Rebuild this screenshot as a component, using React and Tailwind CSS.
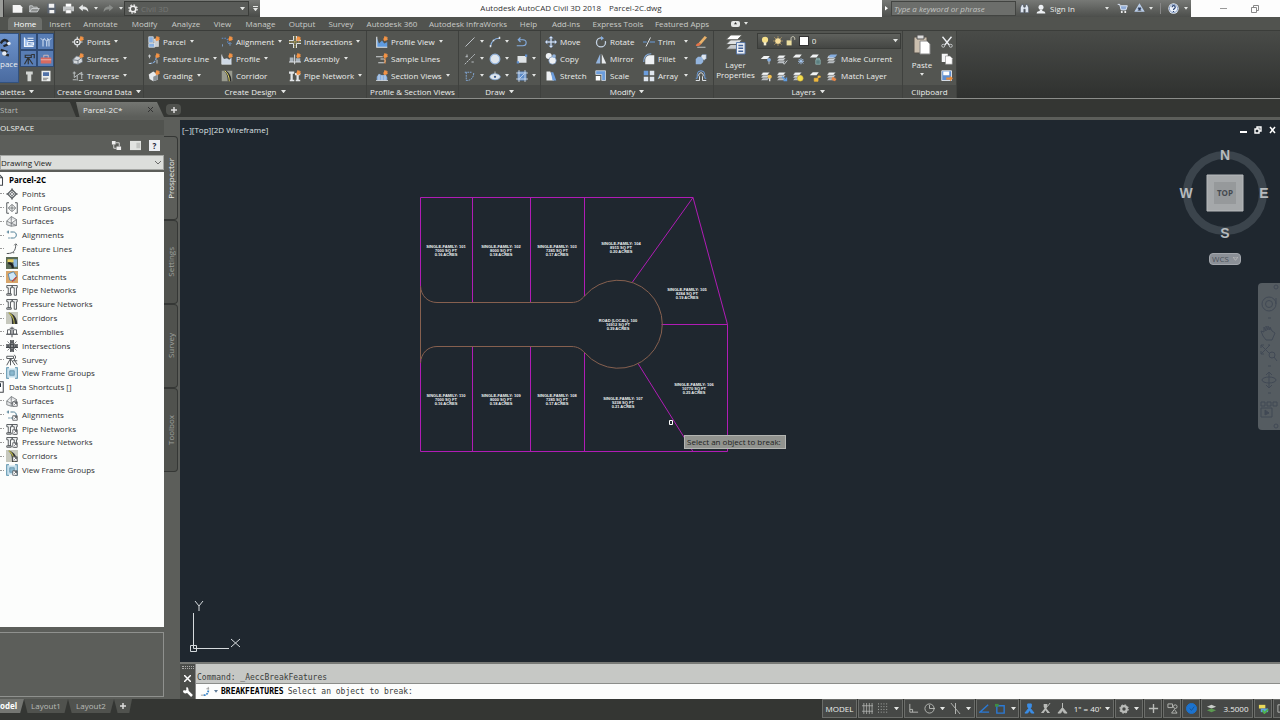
import clsx from 'clsx';

const LIGHT = '#dfe3e6';
const BLUE = '#86aee0';

const Spark = () => <path d="M11 0l1.2 1 1.3-1 .6 1.6 1.9.4-1 1.5 1 1.6-1.8.3-.6 1.6-1.3-1-1.6 1-.3-1.8L9.500 4l1.200-1.300z" fill="#f39345" />;

const sheets = (
  <g stroke="#4a4d4a" strokeWidth=".6">
    <path d="M4 10h9l-3 4H1z" fill="#b7bcc0" />
    <path d="M4 6.500h9l-3 4H1z" fill="#cfd3d6" />
    <path d="M4 3h9l-3 4H1z" fill="#f2f4f5" />
  </g>
);

// All drawings share a 16 unit box.
const glyphs = {
  newFile: <path d="M1 3h11l3 3v8H1z" fill="#f5f5f5" />,
  open: <path d="M1 13V4h4l1 2h6v2M1 13l3-5h11l-3 5z" fill="#8d908f" stroke={LIGHT} />,
  save: <><path d="M2 1h12v14H2z" fill="#5b6472" /><path d="M4 1h8v6H4zM5 10h7v5H5z" fill="#f3f3f3" /></>,
  print: <><path d="M4 1h8v5H4z" fill="#fff" /><path d="M0 5h16v7H0z" fill="#c4c7c8" /><path d="M4 10h8v5H4z" fill="#fff" stroke="#777" strokeWidth=".6" /></>,
  undo: <path d="M1 7l6-5v3c5 0 8 2 8 8-2-3-4-4-8-4v3z" fill="#e5e7e8" />,
  redo: <path d="M15 7L9 2v3c-5 0-8 2-8 8 2-3 4-4 8-4v3z" fill="#8b8e8b" />,
  gear: <g fill="none" stroke="#f0f0f0"><circle cx="8" cy="8" r="4.500" strokeWidth="2.500" /><circle cx="8" cy="8" r="6.600" strokeWidth="2" strokeDasharray="2.600 2.600" /></g>,
  gearDim: <g fill="none" stroke="#b9bbb8"><circle cx="8" cy="8" r="4.500" strokeWidth="3.500" /><circle cx="8" cy="8" r="6.600" strokeWidth="2" strokeDasharray="2.600 2.600" /></g>,
  binoculars: <><path d="M2 14V7l2-5h2l1 4h2l1-4h2l2 5v7h-5V9H7v5z" fill="#dfe6f0" stroke="#3a4659" strokeWidth=".8" /></>,
  user: <><circle cx="8" cy="5" r="4" fill="#eef1f4" /><path d="M1 15c0-3 3-4 5-4V9h4v2c2 0 5 1 5 4z" fill="#eef1f4" /></>,
  cart: <><path d="M1 2h3l2 8h7l2-6H5" fill="#8fabd6" stroke="#dfe8f6" strokeWidth="1.400" /><circle cx="7" cy="13" r="1.500" fill="#fff" /><circle cx="12" cy="13" r="1.500" fill="#fff" /></>,
  apps: <><path d="M8 2L2 12h12zM2 12l6-4 6 4M8 2v6" fill="none" stroke="#b9cdea" strokeWidth="1.800" /><circle cx="8" cy="8.500" r="2" fill="#26395e" /></>,
  help: <><circle cx="8" cy="8" r="7.500" fill="#eef3fb" /><circle cx="8" cy="8" r="6" fill="none" stroke="#5878ab" /><path d="M6 6c0-3 4.500-3 4.500 0C10.500 8 8 8 8 10M8 11.500v1.500" stroke="#27406e" strokeWidth="1.800" fill="none" /></>,
  points: <><path d="M7 1v14M0 8h14" stroke={LIGHT} strokeWidth="1.500" /><circle cx="7" cy="8" r="3.800" fill="#4a4d4a" stroke={LIGHT} strokeWidth="1.800" /><circle cx="7" cy="8" r="1.400" fill="#fff" /><Spark /></>,
  surfaces: <><path d="M1 9l5-5 7 2 1 6-6 3-6-1z" fill="#d5d9dc" stroke="#6f7a85" /><path d="M1 9l7 1 5-4M8 10v5" stroke="#59636e" fill="none" /><Spark /></>,
  traverse: <path d="M3 2v8M1 4h4M3 10l4-3 6-4v9M7 7v7M1 13h5M9 14h6M10 5l5 1" fill="none" stroke="#c3c8cb" strokeWidth="1.200" />,
  parcel: <><path d="M1 1h6v8H1zM1 10h8v5H1z" fill={BLUE} stroke={LIGHT} /><path d="M8 4h6v10H9z" fill="#c9ced3" stroke="#fff" strokeWidth=".6" /><Spark /></>,
  feature: <><path d="M2 14c6 0 9-3 9-10" fill="none" stroke={BLUE} strokeWidth="1.500" strokeDasharray="4 1" /><path d="M2 2v5M0 4h4M1 14h3M12 9v5" stroke={LIGHT} /><Spark /></>,
  grading: <><path d="M1 6l6-4 6 4v7l-6 2-5-3z" fill="#e8eaec" /><path d="M7 9l6-3v7l-6 2z" fill="#8b9196" /><Spark /></>,
  alignment: <><path d="M1 3h5c4 0 3 7 3 7h5" fill="none" stroke="#5f8fd0" strokeWidth="1.500" strokeDasharray="2 1.500" /><path d="M2 11v3M12 8v5" stroke={BLUE} /><Spark /></>,
  profile: <><path d="M1 3l3 5 4-1 3 2 3-3v9H1z" fill="#cfd9e6" /><path d="M1 2v13h13" stroke={LIGHT} fill="none" /><Spark /></>,
  corridor: <><path d="M1 1h14v14H1z" fill="#999b8f" /><path d="M4 1c4 3 5 8 5 14h5c0-7-3-11-7-14z" fill="#26282a" /><path d="M5 1c4 3 6 8 6 14" stroke="#e8dc6a" fill="none" strokeWidth="1.300" /></>,
  intersections: <><path d="M6 0v6H0M10 0v6h6M6 16v-6H0M10 16v-6h6" fill="none" stroke={LIGHT} strokeWidth="1.300" /><path d="M8 0v16M0 8h16" stroke="#e5cc59" strokeDasharray="2 1" /><Spark /></>,
  assembly: <><path d="M1 6h5v6H1zM9 7h6v5H9z" fill="#aab4bd" /><path d="M7.500 2v13M0 12h16" stroke={LIGHT} strokeWidth="1.300" /><Spark /></>,
  pipes: <><path d="M0 2h7v3H5v8h2v2H1v-2h1V5H0zM8 4h7v3h-2v6h2v2H9v-2h1V7H8z" fill="#e3e6e8" /><Spark /></>,
  profileView: <><path d="M1 2v13h14V8l-4 2-3-4-4 4z" fill="#5f9be0" /><path d="M1 1v14h14" stroke={LIGHT} fill="none" strokeWidth="1.500" /><Spark /></>,
  sampleLines: <><path d="M0 5h9M3 13h7c3 0 3-5 0-5H6" stroke={LIGHT} fill="none" strokeWidth="1.200" /><path d="M12 6v8" stroke="#f39345" strokeWidth="1.500" /><Spark /></>,
  sectionViews: <><path d="M1 14V9l3-4 4 2 5-1 2 4v4z" fill={BLUE} /><path d="M0 14h16M4 6v8M8 7v7M12 7v7" stroke={LIGHT} /><Spark /></>,
  line: <path d="M2 14L14 2" stroke="#c6ccd1" strokeWidth="1.200" />,
  xline: <path d="M1 15L15 1M2 5h3M10 12h4M4 2v3" stroke="#c6ccd1" strokeWidth="1.200" strokeDasharray="3 1" />,
  polyline: <path d="M3 3v11c6 0 10-3 10-11M1 3h9" stroke={BLUE} fill="none" strokeDasharray="2.500 1" strokeWidth="1.200" />,
  arc: <><path d="M2 14C3 8 7 3 14 3" fill="none" stroke={BLUE} strokeWidth="1.500" /><path d="M1 12h2v3H1zM13 1h2v3h-2zM5 5h2v2H5z" fill={LIGHT} /></>,
  circle: <circle cx="8" cy="8" r="6.500" fill="#dfe6ee" stroke="#93b4dd" strokeWidth="1.500" />,
  ellipse: <><ellipse cx="8" cy="9" rx="7" ry="4" fill="#dfe6ee" stroke={BLUE} /><circle cx="8" cy="9" r="1.500" fill="#35568a" /><path d="M8 2v5" stroke={LIGHT} /></>,
  pline: <path d="M1 13h8c6 0 6-8 0-8H4M6 2L3 5l3 3" fill="none" stroke={BLUE} strokeWidth="1.500" />,
  rect: <><path d="M2 4h12v9H2z" fill="#dfe3e6" /><path d="M12 2h3v3h-3zM1 11h3v3H1z" fill="#5f8fd0" /></>,
  hatch: <><path d="M2 2h12v12H2z" fill="#5e8cc9" /><path d="M4 0v16M12 0v16M0 4h16M0 12h16M5 11l6-6" stroke="#dfe6ee" /></>,
  move: <path d="M8 0l3 3H9v4h4V5l3 3-3 3V9H9v4h2l-3 3-3-3h2V9H3v2L0 8l3-3v2h4V3H5z" fill="#dbe6f4" stroke="#5d7fae" strokeWidth=".5" />,
  copy: <><circle cx="5" cy="4" r="4" fill="#eef1f4" /><circle cx="10" cy="10" r="5" fill="#eef1f4" stroke="#5d7fae" strokeWidth=".8" /><circle cx="12" cy="4" r="2.500" fill="#93b4dd" /></>,
  stretch: <><path d="M2 2h5l5 12H2z" fill="#eef1f4" /><path d="M8 3h3l4 11h-5z" fill="#6b9ddd" /></>,
  rotate: <><circle cx="8" cy="8.500" r="6" fill="none" stroke="#c5d3e4" strokeWidth="1.700" strokeDasharray="30 5" /><path d="M8 0l4 3-4 3z" fill={BLUE} /></>,
  mirror: <><path d="M7 1v13H1z" fill="#93b4dd" /><path d="M9 1v13h6z" fill="#e8ebee" /></>,
  scale: <><path d="M1 1h13v13H9V6H1z" fill="#6b9ddd" stroke={LIGHT} /><path d="M1 8h6v6H1z" fill="#fff" /></>,
  trim: <><path d="M0 8h5M9 8h7" stroke="#6b9ddd" strokeWidth="1.500" /><path d="M4 14L10 2" stroke={LIGHT} strokeWidth="1.300" /></>,
  fillet: <><path d="M3 15V9c0-4 3-6 6-6h6v12z" fill="#eef1f4" /><path d="M1 12C1 5 5 1 11 1" stroke={BLUE} fill="none" strokeWidth="1.500" /></>,
  array: <><path d="M1 1h6v6H1z" fill="#6b9ddd" /><path d="M9 1h6v6H9zM1 9h6v6H1zM9 9h6v6H9z" fill="#dfe6ee" /></>,
  erase: <><path d="M5 9L13 0l3 2-8 9z" fill="#e9b16a" /><path d="M1 13c1-3 3-4 5-4l2 2c-1 2-4 3-7 2z" fill="#e2744a" /><path d="M3 15h11" stroke={LIGHT} /></>,
  explode: <><path d="M1 8l3-3h7v7l-3 3H1z" fill="#93b4dd" /><path d="M8 4l2-2h5v5l-3 3" fill="#dfe6ee" stroke="#5d7fae" strokeWidth=".6" /></>,
  offset: <><path d="M1 14h5V9a3 3 0 114 0v5h5" fill="none" stroke={LIGHT} strokeWidth="1.300" /><path d="M1 11h2V6a5 5 0 0110 0v5h2" fill="none" stroke="#6b9ddd" strokeWidth="1.300" /></>,
  layerOff: <><path d="M5 4h8l-3 4H1z" fill="#f1f3f4" /><circle cx="12" cy="9" r="2.500" fill={BLUE} /><path d="M12 11v4" stroke={LIGHT} /></>,
  layerIso: <>{sheets}<path d="M9 12l2 3 4-5" stroke="#c9ced3" fill="none" strokeWidth="1.300" /></>,
  layerFreeze: <><path d="M5 2h8l-3 4H1z" fill="#f1f3f4" /><path d="M12 7v8M8 11h8M9 8l6 6M15 8l-6 6" stroke="#a8c8f0" strokeWidth="1.200" /></>,
  layerLock: <><path d="M5 2h8l-3 4H1z" fill="#f1f3f4" /><path d="M9 9h6v6H9zM10 9V7h4v2" fill="#5c7f80" stroke="#8fb0ae" /></>,
  makeCurrent: <>{sheets}<path d="M6 2h9l-3 4H3z" fill={BLUE} /></>,
  layerOn: <>{sheets}<circle cx="13" cy="9" r="2.800" fill="#f4c04e" /><path d="M13 11v4" stroke="#fff" strokeWidth="1.500" /></>,
  layerUniso: <>{sheets}<path d="M8 9l6 5M14 10v4h-4" stroke="#5f9be0" strokeWidth="1.800" fill="none" /></>,
  layerThaw: <>{sheets}<circle cx="11" cy="11" r="4" fill="#f4e04e" stroke="#b58e2c" strokeWidth=".6" /></>,
  layerUnlock: <><path d="M5 3h8l-3 4H1z" fill="#f1f3f4" /><path d="M7 11h5v4H7zM12 11V8h3v2" fill="#f0b73d" stroke="#f0b73d" /></>,
  matchLayer: <>{sheets}<path d="M9 9l5 3-2 3-5-2z" fill="#e8884a" /></>,
  bulb: <><circle cx="8" cy="6" r="5" fill="#f7e08a" /><path d="M6 10h4v5H6z" fill="#f3ecd0" /></>,
  sun: <><path d="M8 0v16M0 8h16M2 2l12 12M14 2L2 14" stroke="#c9a869" /><circle cx="8" cy="8" r="4.500" fill="#f5dc9a" /></>,
  lock: <><path d="M1 7h8v8H1z" fill="#ecdfa0" /><path d="M8 7V4c0-4 6-4 6 0v2" fill="none" stroke="#d8d4c0" strokeWidth="1.500" /></>,
  cut: <><path d="M2 1l9 11M14 1L5 12" stroke="#eef1f4" strokeWidth="1.800" /><circle cx="3" cy="13" r="2" fill="none" stroke={LIGHT} /><circle cx="13" cy="13" r="2" fill="none" stroke={LIGHT} /></>,
  copyClip: <><path d="M1 1h8v11H1z" fill="#f5f6f7" /><path d="M6 4h6l3 3v8H6z" fill="#fff" stroke="#888" strokeWidth=".8" /></>,
  pasteSpecial: <><path d="M1 1h13v13H1z" fill="#5f8fd0" stroke="#fff" /><path d="M3 2h8v5H3z" fill="#fff" /><path d="M7 10h5V8l4 3-4 4v-2H7z" fill="#e58a3a" /></>,
  paletteA: <path d="M2 2v12h12M6 3h8M6 6h8M6 9h8v3H6z" stroke="#eef3fa" strokeWidth="1.600" fill="#9fc0ee" />,
  paletteB: <path d="M1 3l3 3 2-3M4 6v8M6 4l3 3 2-3M9 7v7M10 3l2 3 3-3M12 6v8" stroke="#dce8f8" fill="none" strokeWidth="1.300" />,
  tripod: <path d="M3 3h8v3H3zM7 6l-5 9M7 6v9M7 6l6 9M11 2h4v5" stroke="#313437" fill="none" strokeWidth="1.600" />,
  toolbox: <><path d="M1 6h14v8H1z" fill="#d86a5f" /><path d="M5 6V3h6v3M1 9h14" stroke="#f2c5bf" fill="none" /></>,
  calc: <path d="M4 2h9v4h-2v9H6V6H4z" fill="#d2d5d2" />,
  sheet: <><path d="M2 1h12v14H2z" fill="#eceeed" /><path d="M4 3h8v5H4z" fill="#5272a8" /><path d="M4 11h7M4 13h5" stroke="#666" /></>,
  tPoints: <><path d="M8 0v16M0 8h16" stroke="#54585c" /><path d="M8 2l6 6-6 6-6-6z" fill="none" stroke="#54585c" strokeWidth="1.500" /><circle cx="8" cy="8" r="2" fill="#fff" stroke="#54585c" /></>,
  tPointGroups: <><path d="M4 1H1v14h3M12 1h3v14h-3" stroke="#54585c" fill="none" strokeWidth="1.300" /><path d="M8 3l5 5-5 5-5-5zM8 4v8M4 8h8" stroke="#54585c" fill="none" /></>,
  tSurfaces: <path d="M1 8l6-6 7 4v8l-7 1-6-2zM1 8l6 3 7-5M7 2v13M7 11l7 3" stroke="#6a6e72" fill="#e3e5e6" />,
  tAlignments: <path d="M1 4h3M6 4h4c5 0 5 8 0 8H6M3 12h2M3 2v4" stroke="#4d7c94" fill="none" strokeWidth="1.300" />,
  tFeature: <path d="M2 14c7 0 11-3 11-12M11 3l2-2 2 2M1 14h3M9 13h2" stroke="#54585c" fill="none" strokeWidth="1.300" />,
  tSites: <><path d="M0 0h16v16H0z" fill="#5a6a55" /><path d="M2 3h9v4H2z" fill="#e4cf60" /><path d="M10 3h5v10h-5z" fill="#8fbbe0" /><path d="M3 8c5 0 6 3 6 7" stroke="#1d2022" strokeWidth="3" fill="none" /></>,
  tCatch: <><path d="M0 0h16v16H0z" fill="#d8a66a" /><path d="M3 4l7-3 4 6-3 6-6-1z" fill="#cfe7f6" stroke="#3a78ad" /><path d="M8 14l6-6" stroke="#c4433a" strokeWidth="1.500" /></>,
  tPipes: <path d="M1 2h7v3H6v8H3V5H1zM8 2h7v3h-1v10h-3V5H9zM1 13h6v2H1z" fill="#eceeef" stroke="#4f5357" strokeWidth="1.200" />,
  tCorridor: <><path d="M0 0h16v16H0z" fill="#c6c8bd" /><path d="M3 1c5 4 5 9 5 15h7C15 9 11 3 5 1z" fill="#303234" /><path d="M4 1c5 4 7 9 7 15" stroke="#b9b44c" fill="none" strokeWidth="1.500" /></>,
  tAssembly: <><path d="M2 5h4v6H2zM10 5h4v6h-4z" fill="none" stroke="#54585c" strokeWidth="1.200" /><path d="M8 1v14M0 11h16M5 3h6" stroke="#54585c" strokeWidth="1.400" /></>,
  tCross: <><path d="M8 0v16M0 8h16" stroke="#44484c" strokeWidth="5" /><path d="M8 0v16M0 8h16" stroke="#d9d9d9" strokeWidth="1" strokeDasharray="2 1.500" /><path d="M2 2l3 3M14 2l-3 3M2 14l3-3M14 14l-3-3" stroke="#54585c" /></>,
  tSurvey: <path d="M1 3h9v3H1zM6 6l-5 9M6 6v9M6 6l6 9M11 1l2 3-2 4 4 6M9 9h6" stroke="#54585c" fill="none" strokeWidth="1.300" />,
  tFrames: <><path d="M2 2h12v12H2z" fill="#c5e0ee" /><path d="M4 1H1v14h3M12 1h3v14h-3" stroke="#4a88a6" fill="none" strokeWidth="1.400" /><path d="M5 5h6v6H5z" fill="#8bb8cf" stroke="#5e8ba2" /></>,
  tDoc: <path d="M3 1h7l4 4v10H3zM10 1v4h4" stroke="#44484c" fill="#fff" strokeWidth="1.400" />,
  tShort: <><path d="M1 1h14v14H1z" fill="#fff" stroke="#44484c" strokeWidth="1.400" /><path d="M6 9l5-5M7 4h4v4" stroke="#26313c" strokeWidth="2" fill="none" /></>,
};

const Icon = ({ name, shortcut, className = 'size-3' }) => (
  <svg viewBox="0 0 16 16" className={clsx('shrink-0', className)} aria-hidden="true">
    {glyphs[name]}
    {shortcut && <path d="M9 9h6v6H9zM11 13l3-3M11.500 10H14v2.500" fill="#fff" stroke="#44484c" />}
  </svg>
);

const Caret = ({ className = 'w-[5px]' }) => (
  <svg viewBox="0 0 6 4" className={clsx('shrink-0', className)} aria-hidden="true"><path d="M0 0h6L3 4z" fill="#e4e6e4" /></svg>
);

const Tool = ({ icon, label, caret, title }) => (
  <button type="button" aria-label={label ? undefined : title} className="flex h-[17px] items-center gap-[3px] whitespace-nowrap">
    <Icon name={icon} />
    {label}
    {caret && <Caret className="w-1 ml-px" />}
  </button>
);

const Panel = ({ title, caret, className, titleClassName = 'justify-center', children }) => (
  <section className={clsx('flex shrink-0 flex-col border-r border-[#3f413e] bg-[#535551]', className)}>
    <div className="flex-1 pt-[2px]">{children}</div>
    <h2 className={clsx('flex h-[13px] items-center gap-1 whitespace-nowrap bg-[#474946]', titleClassName)}>
      {title}
      {caret && <Caret />}
    </h2>
  </section>
);

const menuTabs = [
  ['Home', 'w-[34px]'], ['Insert', 'w-[36px]'], ['Annotate', 'w-[45px]'], ['Modify', 'w-[43px]'], ['Analyze', 'w-[40px]'],
  ['View', 'w-[33px]'], ['Manage', 'w-[43px]'], ['Output', 'w-[40px]'], ['Survey', 'w-[38px]'], ['Autodesk 360', 'w-[64px]'],
  ['Autodesk InfraWorks', 'w-[88px]'], ['Help', 'w-[33px]'], ['Add-ins', 'w-[42px]'], ['Express Tools', 'w-[62px]'], ['Featured Apps', 'w-[66px]'],
];

const TitleBar = () => (
  <header className="flex h-[17px] shrink-0 bg-[#fdfdfd]">
    <div className="flex w-[260px] items-center bg-linear-to-b from-[#777976] to-[#484a47]">
      <span className="mr-[5px] h-full w-1 border-r border-[#333] bg-[#9b9d9a]" />
      {['newFile', 'open', 'save', 'print'].map((n) => (
        <button key={n} type="button" aria-label={n} className="flex w-[17px] justify-center"><Icon name={n} className="size-[11px]" /></button>
      ))}
      <button type="button" aria-label="Undo" className="ml-px flex w-[25px] items-center gap-[5px]"><Icon name="undo" className="size-[11px]" /><Caret className="w-1" /></button>
      <button type="button" aria-label="Redo" className="flex w-[21px] items-center gap-[5px]"><Icon name="redo" className="size-[11px]" /><Caret className="w-1" /></button>
      <label className="flex h-[15px] w-[125px] items-center gap-[3px] border border-[#3a3c39] bg-[#595b58] px-[3px]">
        <Icon name="gear" className="size-[10px]" />
        <select aria-label="Workspace" className="w-[96px] appearance-none text-[#757774] outline-none"><option>Civil 3D</option></select>
        <Caret />
      </label>
      <button type="button" aria-label="Customize toolbar" className="ml-1 flex flex-col items-center gap-px"><span className="h-px w-[5px] bg-[#e4e6e4]" /><Caret /></button>
    </div>
    <h1 className="flex flex-1 items-center justify-center gap-2 pb-[2px] text-[#333]">
      <span>Autodesk AutoCAD Civil 3D 2018</span>
      <span>Parcel-2C.dwg</span>
    </h1>
    <div className="flex w-[309px] items-center bg-linear-to-b from-[#777976] to-[#4c4e4b]">
      <button type="button" aria-label="Collapse search" className="flex w-[9px] justify-center"><svg viewBox="0 0 4 6" className="w-[3px]"><path d="M0 0l4 3-4 3z" fill="#fff" /></svg></button>
      <input aria-label="Search" placeholder="Type a keyword or phrase" className="h-[15px] w-[125px] border border-[#424441] bg-[#6c6e6b] px-[2px] italic placeholder:text-[#c3c5c2]" />
      <button type="button" aria-label="Find" className="ml-[3px]"><Icon name="binoculars" className="size-[11px]" /></button>
      <button type="button" className="ml-[6px] flex items-center gap-1"><Icon name="user" className="size-[10px]" />Sign In</button>
      <Caret className="ml-auto w-1" />
      <button type="button" aria-label="App store" className="ml-2"><Icon name="cart" className="size-[11px]" /></button>
      <button type="button" aria-label="Autodesk apps" className="ml-[6px] flex items-center gap-1"><Icon name="apps" className="size-[11px]" /><Caret className="w-1" /></button>
      <button type="button" aria-label="Help" className="mr-[3px] ml-[7px] flex items-center gap-[5px] border-l border-[#888] pl-[7px]"><Icon name="help" className="size-[11px]" /><Caret className="w-1" /></button>
    </div>
    <div className="flex w-[89px] items-center text-[#999]">
      <button type="button" aria-label="Minimize" className="ml-[29px] h-px w-[7px] bg-[#999]" />
      <button type="button" aria-label="Restore" className="ml-[24px]">
        <svg viewBox="0 0 8 8" className="size-2"><path d="M.5 2.500h5v5h-5zM2.500 2V.5h5v5H6" fill="none" stroke="#888" /></svg>
      </button>
    </div>
  </header>
);

const Ribbon = () => (
  <>
    <nav className="flex h-[14px] shrink-0 border-b border-[#3b3d3a] bg-[#51534f] pl-2 text-[#c9cbc8]">
      {menuTabs.map(([name, width], i) => (
        <button key={name} type="button" className={clsx('shrink-0 text-center whitespace-nowrap', width, i === 0 && 'rounded-t-sm bg-[#6c6e6a] text-white')}>{name}</button>
      ))}
      <button type="button" aria-label="Minimize ribbon" className="ml-4 flex items-center gap-1">
        <span className="flex h-[6px] w-[9px] items-center justify-center rounded-xs bg-[#e6e8e6]"><svg viewBox="0 0 4 3" className="w-[3px]"><path d="M0 3h4L2 0z" fill="#333" /></svg></span>
        <Caret className="w-1" />
      </button>
    </nav>
    <div className="flex h-[68px] shrink-0 border-b border-[#8b8d8a] bg-linear-to-b from-[#494b48] to-[#2f312f]">
      <Panel title="alettes" caret className="w-[55px]" titleClassName="justify-start">
        <div className="flex gap-px">
          <button type="button" aria-label="Toolspace" className="flex h-[50px] w-[19px] flex-col items-start justify-between border border-l-0 border-[#33527f] bg-linear-to-b from-[#6d93cc] to-[#4a6ba0] pb-3">
            <svg viewBox="0 0 16 22" className="mt-1 w-4"><path d="M0 6c3-6 8-4 8 0M3 9l5-2M0 13l6 2-2 3 5 1" stroke="#23272b" strokeWidth="2.500" fill="none" /><circle cx="9" cy="6" r="2" fill="#e7ecf3" /><circle cx="4" cy="17" r="2.500" fill="#e7ecf3" /></svg>
            <span>pace</span>
          </button>
          <div className="grid grid-cols-2">
            {['paletteA', 'paletteB', 'tripod', 'toolbox', 'calc', 'sheet'].map((n, i) => (
              <button key={n} type="button" aria-label={n} className={clsx('flex h-[17px] w-[17px] items-center justify-center', i < 4 && 'border border-[#2f4a73] bg-[#587db5]')}><Icon name={n} /></button>
            ))}
          </div>
        </div>
      </Panel>
      <Panel title="Create Ground Data" caret className="w-[89px]">
        <div className="pl-[17px]">
          <Tool icon="points" label="Points" caret />
          <Tool icon="surfaces" label="Surfaces" caret />
          <Tool icon="traverse" label="Traverse" caret />
        </div>
      </Panel>
      <Panel title="Create Design" caret className="w-[223px]">
        <div className="grid grid-cols-[73px_68px_1fr] pl-1">
          <Tool icon="parcel" label="Parcel" caret />
          <Tool icon="alignment" label="Alignment" caret />
          <Tool icon="intersections" label="Intersections" caret />
          <Tool icon="feature" label="Feature Line" caret />
          <Tool icon="profile" label="Profile" caret />
          <Tool icon="assembly" label="Assembly" caret />
          <Tool icon="grading" label="Grading" caret />
          <Tool icon="corridor" label="Corridor" />
          <Tool icon="pipes" label="Pipe Network" caret />
        </div>
      </Panel>
      <Panel title="Profile & Section Views" className="w-[92px]">
        <div className="pl-[9px]">
          <Tool icon="profileView" label="Profile View" caret />
          <Tool icon="sampleLines" label="Sample Lines" />
          <Tool icon="sectionViews" label="Section Views" caret />
        </div>
      </Panel>
      <Panel title="Draw" caret className="w-[82px]">
        <div className="grid grid-cols-[25px_27px_1fr] pl-[5px]">
          <Tool icon="line" title="Line" caret />
          <Tool icon="arc" title="Arc" caret />
          <Tool icon="pline" title="Polyline" />
          <Tool icon="xline" title="Construction line" caret />
          <Tool icon="circle" title="Circle" caret />
          <Tool icon="rect" title="Rectangle" caret />
          <Tool icon="polyline" title="3D polyline" caret />
          <Tool icon="ellipse" title="Ellipse" caret />
          <Tool icon="hatch" title="Hatch" caret />
        </div>
      </Panel>
      <Panel title="Modify" caret className="w-[173px]">
        <div className="grid grid-cols-[50px_48px_52px_1fr] pl-1">
          <Tool icon="move" label="Move" />
          <Tool icon="rotate" label="Rotate" />
          <Tool icon="trim" label={<span className="w-[22px] text-left">Trim</span>} caret />
          <Tool icon="erase" title="Erase" />
          <Tool icon="copy" label="Copy" />
          <Tool icon="mirror" label="Mirror" />
          <Tool icon="fillet" label={<span className="w-[22px] text-left">Fillet</span>} caret />
          <Tool icon="explode" title="Explode" />
          <Tool icon="stretch" label="Stretch" />
          <Tool icon="scale" label="Scale" />
          <Tool icon="array" label={<span className="w-[22px] text-left">Array</span>} caret />
          <Tool icon="offset" title="Offset" />
        </div>
      </Panel>
      <Panel title="Layers" caret className="w-[189px]">
        <div className="flex">
          <button type="button" className="flex w-[43px] flex-col items-center leading-[10px]">
            <svg viewBox="0 0 22 22" className="mt-px mb-[5px] size-[21px]">
              <path d="M6 11h12l-5 5H1z" fill="#c6cacd" stroke="#5a5c58" /><path d="M6 6h12l-5 5H1z" fill="#dfe2e4" stroke="#5a5c58" /><path d="M6 1h12l-5 5H1z" fill="#fff" stroke="#5a5c58" />
              <path d="M12 9h9v12h-9z" fill="#eef1f5" stroke="#5373a8" /><path d="M14 12h5M14 15h5M14 18h5" stroke="#44659c" strokeWidth="1.500" />
            </svg>
            Layer<br />Properties
          </button>
          <div className="flex-1">
            <label className="flex h-4 w-[144px] items-center gap-[3px] border border-[#3a3c39] bg-linear-to-b from-[#5f615d] to-[#444643] px-[2px]">
              <Icon name="bulb" className="size-[10px]" /><Icon name="sun" className="size-[10px]" /><Icon name="lock" className="size-[10px]" />
              <span className="size-[10px] border border-[#333] bg-white" />
              <select aria-label="Layer" className="w-[80px] appearance-none outline-none"><option>0</option></select>
              <Caret />
            </label>
            <div className="grid grid-cols-[16px_16px_17px_17px_1fr] pt-px pl-[3px]">
              <Tool icon="layerOff" title="Layer off" />
              <Tool icon="layerIso" title="Isolate layer" />
              <Tool icon="layerFreeze" title="Freeze layer" />
              <Tool icon="layerLock" title="Lock layer" />
              <Tool icon="makeCurrent" label="Make Current" />
              <Tool icon="layerOn" title="Layer on" />
              <Tool icon="layerUniso" title="Unisolate layer" />
              <Tool icon="layerThaw" title="Thaw layer" />
              <Tool icon="layerUnlock" title="Unlock layer" />
              <Tool icon="matchLayer" label="Match Layer" />
            </div>
          </div>
        </div>
      </Panel>
      <Panel title="Clipboard" className="w-[54px]">
        <div className="flex">
          <button type="button" className="flex w-[38px] flex-col items-center leading-[10px]">
            <svg viewBox="0 0 18 21" className="mt-px mb-[5px] h-[21px]">
              <path d="M1 3h13v16H1z" fill="#cbbfae" stroke="#54504a" /><path d="M4 1h7v4H4z" fill="#ddd" stroke="#555" />
              <path d="M7 7h7l3 3v10H7z" fill="#fff" stroke="#888" />
            </svg>
            Paste
            <Caret className="mt-[3px] w-1" />
          </button>
          <div>
            <Tool icon="cut" title="Cut" />
            <Tool icon="copyClip" title="Copy" />
            <Tool icon="pasteSpecial" title="Paste special" />
          </div>
        </div>
      </Panel>
    </div>
  </>
);

const FileTabs = () => (
  <div className="flex h-[21px] shrink-0 items-end border-b-[3px] border-[#5c5e5a] bg-[#343633] text-[#b5b7b4]">
    <button type="button" className="h-[15px] w-[76px] bg-[#50524e] text-left [clip-path:polygon(0_0,92%_0,100%_100%,0_100%)]">Start</button>
    <div className="flex h-[15px] w-[88px] items-center justify-between bg-linear-to-b from-[#747672] to-[#5c5e5a] pr-[11px] pl-[7px] text-[#eceeec] [clip-path:polygon(0_0,92%_0,100%_100%,4%_100%)]">
      <span>Parcel-2C*</span>
      <button type="button" aria-label="Close drawing"><svg viewBox="0 0 5 5" className="size-[5px]"><path d="M0 0l5 5M5 0L0 5" stroke="#333" /></svg></button>
    </div>
    <button type="button" aria-label="New drawing" className="mb-[2px] ml-[2px] flex h-[11px] w-[15px] items-center justify-center rounded-sm bg-[#50524e]">
      <svg viewBox="0 0 6 6" className="size-[6px]"><path d="M3 0v6M0 3h6" stroke="#ddd" strokeWidth="1.500" /></svg>
    </button>
  </div>
);

const tree = [
  { label: 'Parcel-2C', icon: 'tDoc', root: true, bold: true },
  { label: 'Points', icon: 'tPoints' },
  { label: 'Point Groups', icon: 'tPointGroups' },
  { label: 'Surfaces', icon: 'tSurfaces' },
  { label: 'Alignments', icon: 'tAlignments' },
  { label: 'Feature Lines', icon: 'tFeature' },
  { label: 'Sites', icon: 'tSites' },
  { label: 'Catchments', icon: 'tCatch' },
  { label: 'Pipe Networks', icon: 'tPipes' },
  { label: 'Pressure Networks', icon: 'tPipes' },
  { label: 'Corridors', icon: 'tCorridor' },
  { label: 'Assemblies', icon: 'tAssembly' },
  { label: 'Intersections', icon: 'tCross' },
  { label: 'Survey', icon: 'tSurvey' },
  { label: 'View Frame Groups', icon: 'tFrames' },
  { label: 'Data Shortcuts []', icon: 'tShort', root: true },
  { label: 'Surfaces', icon: 'tSurfaces', shortcut: true },
  { label: 'Alignments', icon: 'tAlignments', shortcut: true },
  { label: 'Pipe Networks', icon: 'tPipes', shortcut: true },
  { label: 'Pressure Networks', icon: 'tPipes', shortcut: true },
  { label: 'Corridors', icon: 'tCorridor', shortcut: true },
  { label: 'View Frame Groups', icon: 'tFrames', shortcut: true },
];

const Toolspace = () => (
  <aside className="flex w-[180px] shrink-0 bg-[#5c5e5a]">
    <div className="flex w-[164px] flex-col">
      <h2 className="h-[15px] bg-[#51534f] leading-[15px]">OLSPACE</h2>
      <div className="flex h-5 items-center justify-end gap-2 pr-1">
        <button type="button" aria-label="Toggle tree"><svg viewBox="0 0 12 12" className="size-[11px]"><path d="M1 1h4v4H1zM6 7h5v4H6z" fill="#eee" /><path d="M3 5v4h3M5 3h4v4" stroke="#ddd" fill="none" /></svg></button>
        <button type="button" aria-label="Preview"><svg viewBox="0 0 12 12" className="size-[11px]"><path d="M0 1h12v10H0z" fill="#e1e3e0" /><path d="M7 3h4v6H7z" fill="#c2c4c1" /></svg></button>
        <button type="button" aria-label="Help" className="size-[11px] bg-[#eceef2] leading-[11px] font-bold text-[#22263c]">?</button>
      </div>
      <label className="flex h-[15px] items-center border border-[#a4a6a3] bg-[#dcdedb] pr-[2px]">
        <select aria-label="View" className="flex-1 appearance-none text-[#222] outline-none"><option>Drawing View</option></select>
        <svg viewBox="0 0 8 5" className="w-[6px]"><path d="M0 0l4 4 4-4" stroke="#444" fill="none" /></svg>
      </label>
      <div className="mt-[2px] flex-1 bg-[#fcfdfc] pt-px text-[#2e3032]">
        <ul className="grid h-[304px] auto-rows-fr">
          {tree.map((item, i) => (
            <li key={i} className={clsx('flex items-center whitespace-nowrap', item.bold && 'font-bold text-black')}>
              {item.root
                ? <Icon name={item.icon} className="-ml-2 mr-[5px] size-3" />
                : <><span className="w-1 border-t border-dotted border-[#999]" /><Icon name={item.icon} shortcut={item.shortcut} className="mr-[4px] ml-[2px] size-3" /></>}
              {item.label}
            </li>
          ))}
        </ul>
      </div>
      <div className="mt-[5px] mb-[2px] h-[65px] border border-l-0 border-[#8f918e]" />
    </div>
    <div className="mt-4 w-[14px] text-[#9fa19e]">
      {['Prospector', 'Settings', 'Survey', 'Toolbox'].map((t, i) => (
        <button key={t} type="button" className={clsx('flex h-[84px] w-[14px] items-center justify-center rounded-r-sm border border-l-0 border-[#353735]', i === 0 ? 'bg-[#5c5e5a] text-[#eceeec]' : 'bg-[#50524e]')}>
          <span className="rotate-180 [writing-mode:vertical-rl]">{t}</span>
        </button>
      ))}
    </div>
  </aside>
);

const lots = [
  [446, 248, 'SINGLE-FAMILY: 101', '7000 SQ FT', '0.16 ACRES'],
  [501, 248, 'SINGLE-FAMILY: 102', '8000 SQ FT', '0.18 ACRES'],
  [557, 248, 'SINGLE-FAMILY: 103', '7285 SQ FT', '0.17 ACRES'],
  [621, 245, 'SINGLE-FAMILY: 104', '8915 SQ FT', '0.20 ACRES'],
  [687, 291, 'SINGLE-FAMILY: 105', '8284 SQ FT', '0.19 ACRES'],
  [694, 386, 'SINGLE-FAMILY: 106', '10770 SQ FT', '0.25 ACRES'],
  [623, 400, 'SINGLE-FAMILY: 107', '9238 SQ FT', '0.21 ACRES'],
  [557, 397, 'SINGLE-FAMILY: 108', '7285 SQ FT', '0.17 ACRES'],
  [501, 397, 'SINGLE-FAMILY: 109', '8000 SQ FT', '0.18 ACRES'],
  [446, 397, 'SINGLE-FAMILY: 110', '7000 SQ FT', '0.16 ACRES'],
  [618, 322, 'ROAD (LOCAL): 100', '16912 SQ FT', '0.39 ACRES'],
];

const ParcelDrawing = () => (
  <svg viewBox="180 120 700 542" className="block h-[542px] w-[700px]">
    <g fill="none" stroke="#b01cb5">
      <path d="M420.500 289V197.500H693L727.500 324.500V451.500H420.500V359" />
      <path d="M472.500 197v106M530.500 197v106M584.500 197v99M472.500 346v105M530.500 346v105M584.500 353v98" />
      <path d="M693 197.500L632.500 282M661.500 324.500h66M638 363.500l55 88" />
    </g>
    <path d="M420.500 289v70M420.500 286C421 296 428 302.500 437 302.500H571C578 302.500 581 300 585 295.500A44 44 0 1 1 585 353C581 349 578 346.500 571 346.500H437C428 346.500 421 353 420.500 363" fill="none" stroke="#86604f" />
    <g fill="#f1f3f4" fontSize="4" fontWeight="bold" fontFamily="'Liberation Sans', sans-serif" textAnchor="middle">
      {lots.map(([x, y, ...lines]) => (
        <text key={lines[0]}>{lines.map((l, i) => <tspan key={l} x={x} y={y + i * 4}>{l}</tspan>)}</text>
      ))}
    </g>
    <path d="M669.500 420.500h3v4h-3z" fill="none" stroke="#fff" />
    <g fill="none" stroke="#d5dadd">
      <path d="M193.500 613v35.500H229M190.500 645.500h6v6h-6z" />
      <path d="M231 639l9 8M240 639l-9 8M195 601l4 5 4-5M199 606v5" />
    </g>
  </svg>
);

const NavBar = () => (
  <div className="absolute top-[163px] right-0 w-[22px] rounded-l-sm bg-[#555c61]">
    <svg viewBox="0 0 22 147" className="w-[22px]" fill="none" stroke="#414955">
      <circle cx="18" cy="4" r="2" />
      <circle cx="11" cy="21" r="7" /><circle cx="11" cy="21" r="3.500" />
      <path d="M18 15v6M10 35h3" />
      <path d="M5 53l-2-5 3 1V44l2 4v-5l2 4v-4l2 4v-3l2 4 3 2-3 7H8z" />
      <path d="M3 62l9 9M12 62l-9 9M3 65v-3h3M12 62l-2 0M3 68v3h3" /><circle cx="14" cy="72" r="3" /><path d="M16 74l3 4M10 83h3" />
      <path d="M11 89v16M8 92l3-3 3 3M8 102l3 3 3-3" /><ellipse cx="11" cy="97" rx="7" ry="3" /><path d="M10 110h3" />
      <path d="M3 119h4v4H3zM9 119h4v4H9zM15 119h4v4h-4zM3 125h11v9H3z" /><path d="M7 127l4 3-4 2z" fill="#414955" />
      <circle cx="18" cy="143" r="2" />
    </svg>
  </div>
);

const Canvas = () => (
  <main className="relative flex-1 overflow-hidden bg-[#1f272f]">
    <ParcelDrawing />
    <p className="absolute top-1 left-[2px] leading-[11px] text-[#dfe3e6]">[−][Top][2D Wireframe]</p>
    <p className="absolute top-[315px] left-[504px] h-[14px] w-[102px] border border-[#b3b5b2] bg-[#91938f] px-[2px] leading-3 whitespace-nowrap text-[#1c1e1c]">Select an object to break:</p>
    <div className="absolute top-[6px] right-1 flex gap-[6px]">
      <button type="button" aria-label="Minimize drawing"><svg viewBox="0 0 8 8" className="size-2"><path d="M0 6h7" stroke="#fff" strokeWidth="2" /></svg></button>
      <button type="button" aria-label="Restore drawing"><svg viewBox="0 0 8 8" className="size-2"><path d="M1 3h4v4H1zM3 3V1h4v4H5" fill="none" stroke="#fff" strokeWidth="1.400" /></svg></button>
      <button type="button" aria-label="Close drawing view"><svg viewBox="0 0 8 8" className="size-2"><path d="M2 1l5 6M7 1L2 7" stroke="#fff" strokeWidth="1.500" /></svg></button>
    </div>
    <svg viewBox="0 0 92 92" className="absolute top-[27px] right-[9px] size-[92px]" fontFamily="'Liberation Sans', sans-serif" textAnchor="middle">
      <circle cx="46" cy="46" r="38" fill="none" stroke="#3b444c" strokeWidth="8" />
      <path d="M28 28h36v36H28z" fill="#a5a8aa" stroke="#b7babc" />
      <path d="M35 35h22v22H35z" fill="#96999b" />
      <text x="46" y="49" fontSize="8" fontWeight="bold" fontFamily="'Open Sans', sans-serif" fill="#454a50">TOP</text>
      <g fontSize="14" fontWeight="bold" fill="#b6babd">
        <text x="46" y="13">N</text><text x="46" y="91">S</text><text x="7" y="51">W</text><text x="85" y="51">E</text>
      </g>
    </svg>
    <button type="button" className="absolute top-[133px] right-[39px] flex h-3 w-8 items-center justify-between rounded-sm border border-[#a3a7ad] bg-[#8b9097] px-[2px] text-[#4c525a]">WCS<svg viewBox="0 0 6 4" className="w-[5px]"><path d="M0 0h6L3 4z" fill="none" stroke="#bbb" /></svg></button>
    <NavBar />
  </main>
);

const CommandLine = () => (
  <div className="flex h-[37px] shrink-0 border-t-2 border-[#777976] font-['DejaVu_Sans_Mono',monospace] text-[#3b3d3b]">
    <div className="flex w-4 flex-col items-center justify-between border-r border-[#888] bg-[#4b4d4a] py-[2px]">
      <span className="h-[3px] w-3 border-y border-dotted border-[#aaa]" />
      <button type="button" aria-label="Close command line"><svg viewBox="0 0 7 7" className="size-[7px]"><path d="M0 0l7 7M7 0L0 7" stroke="#fff" strokeWidth="1.500" /></svg></button>
      <button type="button" aria-label="Customize command line"><svg viewBox="0 0 10 10" className="size-[10px]"><path d="M3 3l6 6" stroke="#fff" strokeWidth="2.500" /><path d="M4 0L3 1l1 2-1 1-2-1-1 1c0 2 2 3 4 2s2-5 0-6z" fill="#fff" /></svg></button>
    </div>
    <div className="flex flex-1 flex-col">
      <p className="flex h-[20px] items-end border-b border-[#8b8d8a] bg-[#c6c8c5] pl-px leading-[11px]">Command: _AeccBreakFeatures</p>
      <label className="flex flex-1 items-center bg-[#fcfdfc] pl-1">
        <svg viewBox="0 0 12 12" className="size-[11px]"><path d="M1 10h3M9 1v3M7 3h3" stroke="#999" /><path d="M4 10c3 0 5-2 5-5" stroke="#3c86c8" strokeWidth="2" strokeDasharray="2 1" fill="none" /></svg>
        <svg viewBox="0 0 6 4" className="mx-[3px] w-1"><path d="M0 0h6L3 4z" fill="#5d7a96" /></svg>
        <b className="text-black">BREAKFEATURES</b>
        <input aria-label="Command" defaultValue="Select an object to break:" className="ml-1 flex-1 outline-none" />
      </label>
    </div>
  </div>
);

const Seg = ({ className, children }) => (
  <div className={clsx('flex h-[19px] shrink-0 items-center justify-around border border-[#6b6d6a] bg-[#464846]', className)}>{children}</div>
);

const StatusIcon = ({ title, children }) => (
  <button type="button" aria-label={title}>
    <svg viewBox="0 0 12 12" className="size-[11px]" fill="none" stroke="#b9bbb8">{children}</svg>
  </button>
);

const person = 'M4 1h4v3l-1 2 4 5H8L6 8l-2 3H1l4-5-1-2z';

const StatusBar = () => (
  <footer className="flex h-[21px] shrink-0 items-start justify-between overflow-hidden bg-[#343633] text-[#b9bbb8]">
    <div className="flex h-[14px]">
      <button type="button" className="w-6 bg-[#747672] text-left font-bold text-white [clip-path:polygon(0_0,100%_0,84%_100%,0_100%)]">odel</button>
      <button type="button" className="w-[44px] bg-[#50524e] [clip-path:polygon(0_0,100%_0,92%_100%,8%_100%)]">Layout1</button>
      <button type="button" className="w-[46px] bg-[#50524e] [clip-path:polygon(0_0,100%_0,92%_100%,8%_100%)]">Layout2</button>
      <button type="button" aria-label="New layout" className="flex w-[18px] items-center justify-center bg-[#50524e] [clip-path:polygon(0_0,100%_0,85%_100%,20%_100%)]"><svg viewBox="0 0 6 6" className="size-[6px]"><path d="M3 0v6M0 3h6" stroke="#ddd" strokeWidth="1.500" /></svg></button>
    </div>
    <div className="flex w-[458px] gap-px text-[#eceeec]">
      <Seg className="w-[35px]"><button type="button">MODEL</button></Seg>
      <Seg className="w-[45px]">
        <StatusIcon title="Grid"><path d="M2 0v12M5 0v12M8 0v12M11 0v12M0 3h12M0 9h12" strokeWidth=".8" /></StatusIcon>
        <StatusIcon title="Snap"><path d="M0 1h12M0 4h12M0 7h12M0 10h12" strokeDasharray="1 2" /></StatusIcon>
        <Caret />
      </Seg>
      <Seg className="w-[71px]">
        <StatusIcon title="Ortho"><path d="M2 1v9h9M2 7h3v3" /></StatusIcon>
        <StatusIcon title="Polar tracking"><circle cx="6" cy="6" r="5" /><path d="M6 6h6M6 6V2" /></StatusIcon>
        <Caret />
        <StatusIcon title="Isometric drafting"><path d="M1 0l10 12M6 0v12" /></StatusIcon>
        <Caret />
      </Seg>
      <Seg className="w-[43px]">
        <StatusIcon title="Object snap tracking"><path d="M10 2L1 10h10" stroke="#2b7ad6" strokeWidth="1.500" /></StatusIcon>
        <StatusIcon title="Object snap"><path d="M2 3h8v8H2z" stroke="#2b7ad6" strokeWidth="1.500" /><path d="M0 1h4v3H0z" fill="#3f8d43" stroke="none" /></StatusIcon>
        <Caret />
      </Seg>
      <Seg className="w-[94px]">
        <StatusIcon title="Annotation visibility"><path d={person} fill="#3b8ee8" stroke="#3b8ee8" /></StatusIcon>
        <StatusIcon title="Auto scale"><path d={person} fill="#b9bbb8" stroke="none" /><path d="M11 0L8 4" /></StatusIcon>
        <StatusIcon title="Annotation scale"><path d="M6 0v5l5 6H8L6 8l-2 3H1l5-6z" fill="#b9bbb8" /></StatusIcon>
        <button type="button" className="flex items-center gap-1 whitespace-nowrap">1" = 40'<Caret /></button>
      </Seg>
      <Seg className="w-[28px]">
        <button type="button" aria-label="Workspace switching"><Icon name="gearDim" className="size-[10px]" /></button>
        <Caret />
      </Seg>
      <Seg className="w-[18px]"><StatusIcon title="Annotation monitor"><path d="M6 1v10M1 6h10" strokeWidth="1.500" /></StatusIcon></Seg>
      <Seg className="w-[18px]"><StatusIcon title="Isolate objects"><path d="M1 1h5v4H1zM5 11l3-4 3 4z" /><circle cx="9" cy="4" r="2" /></StatusIcon></Seg>
      <Seg className="w-[18px]"><StatusIcon title="Graphics performance"><circle cx="6" cy="6" r="5.500" fill="#1c73cf" stroke="#1c73cf" /><path d="M4 6l2 2 3-4" stroke="#154f91" /></StatusIcon></Seg>
      <Seg className="w-[52px]">
        <StatusIcon title="Survey"><path d="M1 4l5-2 5 2-5 2z" fill="#c9ccc9" stroke="none" /><path d="M1 8l5-2 5 2-5 2z" fill="#5b9a50" stroke="none" /></StatusIcon>
        <span>3.5000</span>
      </Seg>
      <Seg className="w-[18px]"><StatusIcon title="Coordinate system"><path d="M1 2h7v4H1z" fill="#e9d95a" stroke="none" /><path d="M3 6h8v4H3z" fill="#5aa0e0" stroke="none" /><path d="M5 8l2 3 4-4" stroke="#4fb24c" strokeWidth="2" /></StatusIcon></Seg>
      <Seg className="w-[18px]"><StatusIcon title="Clean screen"><path d="M1 2h10v8H1zM6 6h3v3" /></StatusIcon></Seg>
    </div>
  </footer>
);

export default function App() {
  return (
    <div className="flex h-screen flex-col overflow-hidden bg-[#343633] font-['Open_Sans','Noto_Sans',sans-serif] text-[8px] leading-3 text-[#eceeec]">
      <TitleBar />
      <Ribbon />
      <FileTabs />
      <div className="flex min-h-0 flex-1">
        <Toolspace />
        <div className="flex min-w-0 flex-1 flex-col">
          <Canvas />
          <CommandLine />
        </div>
      </div>
      <StatusBar />
    </div>
  );
}
